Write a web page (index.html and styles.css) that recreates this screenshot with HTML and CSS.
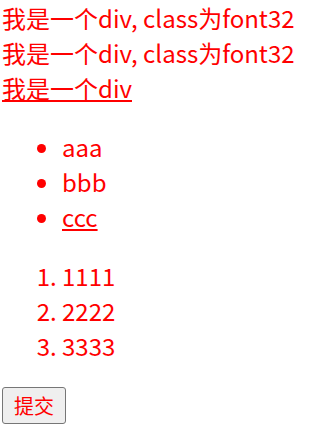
FILE: index.html
```html
<!DOCTYPE html>
<html>
<head>
<meta charset="utf-8">
<link rel="stylesheet" href="styles.css">
</head>
<body>
<div class="font32">我是一个div, class为font32</div>
<div class="font32">我是一个div, class为font32</div>
<div class="font32 under">我是一个div</div>
<ul class="list">
<li>aaa</li>
<li>bbb</li>
<li><span class="under">ccc</span></li>
</ul>
<ol class="list">
<li>1111</li>
<li>2222</li>
<li>3333</li>
</ol>
<button class="btn">提交</button>
</body>
</html>
```
FILE: styles.css
```css
body {
  margin: 0 2px;
  font-family: "Noto Sans CJK SC", sans-serif;
  color: #ff0000;
  font-size: 24px;
}
.font32 {
  font-size: 24px;
}
.under {
  text-decoration: underline;
  display: inline;
}
.font32.under {
  display: block;
}
.list {
  margin: 24px 0;
  padding-left: 60px;
}
.btn {
  display: block;
  font-family: "Noto Sans CJK SC", sans-serif;
  font-size: 20px;
  line-height: 29px;
  color: #ff0000;
  background: #efefef;
  border: 1px solid #767676;
  border-radius: 3px;
  padding: 3px 11px;
}
```
